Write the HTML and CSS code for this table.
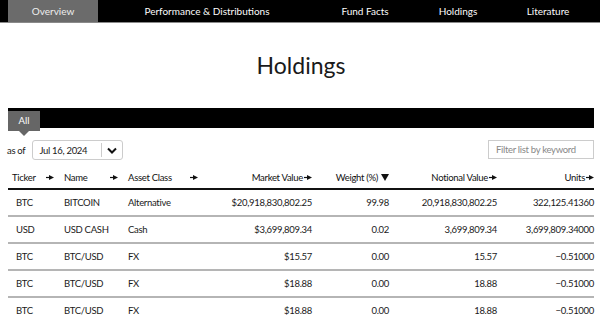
FILE: index.html
```html
<!DOCTYPE html>
<html lang="en">
    <head>
        <meta charset="UTF-8">
        <title>Holdings</title>
        <link rel="stylesheet" href="styles.css">
    </head>
    <body>
        <nav class="topnav">
            <a class="active">Overview</a>
            <a>Performance &amp; Distributions</a>
            <a>Fund Facts</a>
            <a>Holdings</a>
            <a>Literature</a>
        </nav>

        <main class="content">
            <h1>Holdings</h1>

            <div class="tabbar">
                <span class="tab active">All</span>
            </div>

            <div class="controls">
                <div class="asof">
                    <span>as of</span>
                    <div class="datebox">
                        <span class="date">Jul 16, 2024</span>
                        <span class="caret">
                            <svg width="10" height="7" viewBox="0 0 10 7"><path d="M1 1.5 L5 5.5 L9 1.5" fill="none" stroke="#111" stroke-width="2"/></svg>
                        </span>
                    </div>
                </div>
                <input class="filter" type="text" placeholder="Filter list by keyword">
            </div>

            <table class="holdings">
                <thead>
                    <tr>
                        <th class="l c-ticker">Ticker<i class="arr"><svg width="8" height="5" viewBox="0 0 8 5"><path d="M0 2.5 H4" stroke="#111" stroke-width="1.2"/><path d="M3 0 L8 2.5 L3 5 Z" fill="#111"/></svg></i></th>
                        <th class="l c-name">Name<i class="arr"><svg width="8" height="5" viewBox="0 0 8 5"><path d="M0 2.5 H4" stroke="#111" stroke-width="1.2"/><path d="M3 0 L8 2.5 L3 5 Z" fill="#111"/></svg></i></th>
                        <th class="l c-class">Asset Class<i class="arr"><svg width="8" height="5" viewBox="0 0 8 5"><path d="M0 2.5 H4" stroke="#111" stroke-width="1.2"/><path d="M3 0 L8 2.5 L3 5 Z" fill="#111"/></svg></i></th>
                        <th class="r c-mv">Market Value<i class="arr"><svg width="8" height="5" viewBox="0 0 8 5"><path d="M0 2.5 H4" stroke="#111" stroke-width="1.2"/><path d="M3 0 L8 2.5 L3 5 Z" fill="#111"/></svg></i></th>
                        <th class="r c-wt">Weight (%)<i class="down"><svg width="8" height="7" viewBox="0 0 8 7"><path d="M0 0 H8 L4 7 Z" fill="#111"/></svg></i></th>
                        <th class="r c-nv">Notional Value<i class="arr"><svg width="8" height="5" viewBox="0 0 8 5"><path d="M0 2.5 H4" stroke="#111" stroke-width="1.2"/><path d="M3 0 L8 2.5 L3 5 Z" fill="#111"/></svg></i></th>
                        <th class="r c-units">Units<i class="arr"><svg width="8" height="5" viewBox="0 0 8 5"><path d="M0 2.5 H4" stroke="#111" stroke-width="1.2"/><path d="M3 0 L8 2.5 L3 5 Z" fill="#111"/></svg></i></th>
                    </tr>
                </thead>
                <tbody>
                    <tr>
                        <td class="l">BTC</td><td class="l">BITCOIN</td><td class="l">Alternative</td>
                        <td class="r">$20,918,830,802.25</td><td class="r">99.98</td><td class="r">20,918,830,802.25</td><td class="r">322,125.41360</td>
                    </tr>
                    <tr>
                        <td class="l">USD</td><td class="l">USD CASH</td><td class="l">Cash</td>
                        <td class="r">$3,699,809.34</td><td class="r">0.02</td><td class="r">3,699,809.34</td><td class="r">3,699,809.34000</td>
                    </tr>
                    <tr>
                        <td class="l">BTC</td><td class="l">BTC/USD</td><td class="l">FX</td>
                        <td class="r">$15.57</td><td class="r">0.00</td><td class="r">15.57</td><td class="r">&minus;0.51000</td>
                    </tr>
                    <tr>
                        <td class="l">BTC</td><td class="l">BTC/USD</td><td class="l">FX</td>
                        <td class="r">$18.88</td><td class="r">0.00</td><td class="r">18.88</td><td class="r">&minus;0.51000</td>
                    </tr>
                    <tr>
                        <td class="l">BTC</td><td class="l">BTC/USD</td><td class="l">FX</td>
                        <td class="r">$18.88</td><td class="r">0.00</td><td class="r">18.88</td><td class="r">&minus;0.51000</td>
                    </tr>
                </tbody>
            </table>
        </main>
    </body>
</html>
```

FILE: styles.css
```css
* {
    margin: 0; padding: 0; box-sizing: border-box;
}

html, body {
    width: 100%;
    height: 100%;
    background-color: white;
    color: #1a1a1a;
    font-family: Lato, "Open Sans", sans-serif;
    overflow: hidden;
}

.topnav {
    display: grid;
    grid-template-columns: 90px 218px 98px 88px 92px;
    height: 23px;
    padding-left: 8px;
    background-color: black;
    border-bottom: 1px solid #8a8a8a;
}

.topnav a {
    color: #fcfcfc;
    font-size: 10px;
    line-height: 22px;
    text-align: center;
}

.topnav a.active {
    background-color: #6b6b6b;
    color: #eee;
}

.content {
    padding: 0 6px 0 8px;
}

h1 {
    font-weight: normal;
    font-size: 23px;
    text-align: center;
    margin-top: 27px;
    line-height: 30px;
}

.tabbar {
    margin-top: 28px;
    height: 20px;
    background-color: black;
}

.tab {
    position: relative;
    display: inline-block;
    width: 32px;
    height: 20px;
    line-height: 20px;
    text-align: center;
    color: white;
    font-size: 9.5px;
    background-color: #666;
}

.tab.active::after {
    content: "";
    position: absolute;
    left: 11px;
    bottom: -5px;
    border-left: 5px solid transparent;
    border-right: 5px solid transparent;
    border-top: 5px solid #666;
}

.controls {
    display: flex;
    justify-content: space-between;
    align-items: center;
    margin-top: 12px;
    height: 20px;
}

.asof {
    display: flex;
    align-items: center;
    gap: 7px;
    margin-left: -1px;
    font-size: 9.5px;
    letter-spacing: -0.3px;
}

.datebox {
    display: flex;
    align-items: center;
    width: 91px;
    height: 20px;
    border: 1px solid #ccc;
    border-radius: 3px;
}

.date {
    flex: 1;
    padding-left: 6px;
}

.caret {
    width: 21px;
    height: 14px;
    border-left: 1px solid #ccc;
    display: flex;
    align-items: center;
    justify-content: center;
}

.filter {
    width: 106px;
    height: 19px;
    margin-top: -2px;
    border: 1px solid #ccc;
    padding-left: 7px;
    font-family: inherit;
    font-size: 9.5px;
    letter-spacing: -0.3px;
    color: #111;
}

.filter::placeholder {
    color: #888;
}

.holdings {
    width: 100%;
    border-collapse: collapse;
    table-layout: fixed;
    margin-top: 6px;
    font-size: 9.5px;
    letter-spacing: -0.3px;
}

.holdings th {
    font-weight: normal;
    color: #111;
    height: 23px;
    border-bottom: 2px solid #111;
    white-space: nowrap;
}

.holdings td {
    height: 27px;
    border-bottom: 2px solid #b5b5b5;
    white-space: nowrap;
}

.holdings .l { text-align: left; }
.holdings .r { text-align: right; }

.holdings th.l { padding-left: 4px; }
.holdings td.l { padding-left: 8px; }
.holdings td:nth-child(2), .holdings td:nth-child(3) { padding-left: 0; }
.holdings th:nth-child(2), .holdings th:nth-child(3) { padding-left: 0; }

.c-ticker { width: 56px; }
.c-name { width: 64px; }
.c-class { width: 80px; }
.c-mv { width: 104px; }
.c-wt { width: 77px; }
.c-nv { width: 108px; }
.c-units { width: 97px; }

.arr, .down {
    font-style: normal;
    margin-left: 1px;
}

.arr svg {
    vertical-align: 1px;
}

.down svg {
    vertical-align: 0;
    margin-left: 2px;
}

.holdings th.l .arr {
    float: right;
    margin-right: 10px;
}
```
